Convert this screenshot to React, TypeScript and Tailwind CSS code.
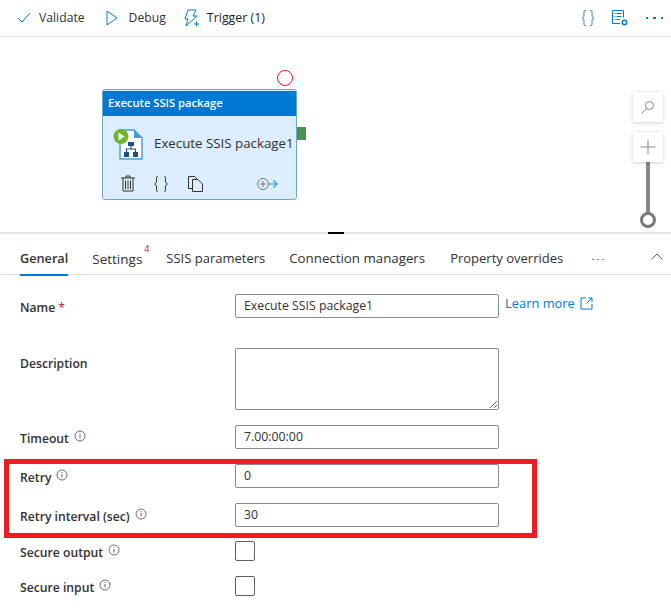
import React from "react";

const Info = () => (
  <svg width="12" height="12" viewBox="0 0 12 12" className="shrink-0 mb-[6px]" fill="none">
    <circle cx="6" cy="6" r="5" stroke="#605e5c" strokeWidth="0.9" />
    <rect x="5.5" y="5" width="1" height="3.6" fill="#7a5a70" />
    <rect x="5.5" y="3" width="1" height="1" fill="#7a5a70" />
  </svg>
);

const Label = ({ text, info, req, compact }: { text: string; info?: boolean; req?: boolean; compact?: boolean }) => (
  <div className={`w-[215px] shrink-0 flex items-center gap-[5px] ${compact ? "pt-[3px]" : "pt-[5px]"} text-[12.2px] font-semibold text-[#323130]`}>
    <span>{text}</span>
    {req && <span className="text-[#a4262c] font-normal -ml-[2px]">*</span>}
    {info && <Info />}
  </div>
);

const Field = ({ value }: { value: string }) => (
  <div className="w-[264px] h-6 border border-[#8a8886] rounded-[2px] px-2 flex items-center text-[12.3px] text-[#323130]">{value}</div>
);

const Row = ({ className, children }: { className: string; children: React.ReactNode }) => (
  <div className={`flex items-center ${className}`}>{children}</div>
);

const Box = () => <div className="w-5 h-5 border border-[#605e5c] rounded-[2px]" />;

export default function App() {
  return (
    <div className="w-[671px] h-[613px] overflow-hidden bg-white relative text-[12.5px] text-[#323130] font-['Open_Sans','Noto_Sans',sans-serif]">
      {/* toolbar */}
      <div className="h-[37px] border-b border-[#e1dfdd] flex items-center pl-[17px] pr-[8px]">
        <svg width="14" height="12" viewBox="0 0 14 12" fill="none" className="mr-[8px]">
          <path d="M1 6l4 4 8-9" stroke="#0078d4" strokeWidth="1" />
        </svg>
        <span className="text-[12.2px] pt-[1px] mr-[21px]">Validate</span>
        <svg width="12" height="16" viewBox="0 0 12 16" fill="none" className="mr-[11px]">
          <path d="M1 1l10 7-10 7z" stroke="#0078d4" strokeWidth="1" />
        </svg>
        <span className="text-[12.2px] pt-[1px] mr-[18px]">Debug</span>
        <svg width="15" height="18" viewBox="0 0 15 18" fill="none" className="mr-[8px]">
          <path d="M4 1h8L9 7h4L2 17l2-7H1z" stroke="#0078d4" strokeWidth="1" />
          <path d="M10 15h5M12.500 12.500v5" stroke="#0078d4" strokeWidth="1" />
        </svg>
        <span className="text-[12.4px] pt-[1px] text-[#201f1e]">Trigger (1)</span>
        <div className="ml-auto flex items-center">
          <svg width="14" height="16" viewBox="0 0 14 16" fill="none" className="mr-[17px]">
            <path d="M5 .5H4C2.500 .5 3 2.500 3 5c0 2-1 3-2 3 1 0 2 1 2 3 0 2.500-.5 4.500 1 4.500h1M9 .5h1c1.500 0 1 2 1 4.500 0 2 1 3 2 3-1 0-2 1-2 3 0 2.500.5 4.500-1 4.500H9" stroke="#3f78d8" strokeWidth="1" />
          </svg>
          <svg width="16" height="16" viewBox="0 0 16 16" fill="none" className="mr-[18px]">
            <path d="M8 13.500H.5V.5h11v7" stroke="#0078d4" strokeWidth="1" />
            <path d="M2.500 3.500h1M4.500 3.500h5M2.500 6.500h1M4.500 6.500h5M2.500 9.500h1M4.500 9.500h3" stroke="#0078d4" strokeWidth="1" />
            <circle cx="12.500" cy="12.500" r="2.200" stroke="#0078d4" strokeWidth="1.500" />
          </svg>
          <div className="flex gap-[5px]">
            <span className="w-[2.500px] h-[2.500px] bg-[#0078d4]" />
            <span className="w-[2.500px] h-[2.500px] bg-[#0078d4]" />
            <span className="w-[2.500px] h-[2.500px] bg-[#0078d4]" />
          </div>
        </div>
      </div>

      {/* canvas */}
      <div className="relative h-[197px] border-b-2 border-[#e6e6e6]">
        <div className="absolute left-[277px] top-[33px] w-[16px] h-[16px] rounded-full border border-[#f0141e]" />
        <div className="absolute left-[102px] top-[52px] w-[195px] h-[111px] rounded-[3px] border border-[#6fa8c4] bg-[#dcedfd] flex flex-col overflow-hidden">
          <div className="h-[25px] shrink-0 bg-[#0078d4] mt-[1px] text-white text-[11.2px] font-semibold flex items-center pl-[5px]">Execute SSIS package</div>
          <div className="flex items-center mt-[11px] pl-[10px]">
            <svg width="32" height="34" viewBox="0 0 32 34" fill="none" className="mr-[9px]">
              <path d="M7 3h14l8 8v21H7z" fill="#fff" stroke="#4a9ddc" strokeWidth="1.500" />
              <path d="M21 3v8h8z" fill="#3f9de0" />
              <rect x="15" y="15" width="6" height="4" fill="#1a4f8a" />
              <rect x="11" y="25" width="5" height="5" fill="#1a4f8a" />
              <rect x="20" y="25" width="5" height="5" fill="#1a4f8a" />
              <path d="M18 19v3M13.500 25v-3h9v3" stroke="#1a4f8a" strokeWidth="1.200" />
              <circle cx="8" cy="9.500" r="7.500" fill="#6fb52c" />
              <path d="M5.500 5.500l6 4-6 4z" fill="#fff" />
            </svg>
            <span className="text-[#323130] whitespace-nowrap text-[13.3px]">Execute SSIS package1</span>
          </div>
          <div className="flex items-center mt-[14px] pl-[18px]">
            <svg width="14" height="17" viewBox="0 0 14 17" fill="none" className="mr-[19px]">
              <path d="M0 3h14M5 3V1h4v2M2 3v13h10V3M4.500 5.500V14M7 5.500V14M9.500 5.500V14" stroke="#323130" strokeWidth="1" />
            </svg>
            <svg width="14" height="16" viewBox="0 0 14 16" fill="none" className="mr-[20px]">
              <path d="M4 .5H3.500C2 .5 2.500 2.500 2.500 5c0 2-1 3-2 3 1 0 2 1 2 3 0 2.500-.5 4.500 1 4.500H4M10 .5h.5C12 .5 11.500 2.500 11.500 5c0 2 1 3 2 3-1 0-2 1-2 3 0 2.500.5 4.500-1 4.500H10" stroke="#323130" strokeWidth="1" />
            </svg>
            <svg width="15" height="16" viewBox="0 0 15 16" fill="none" className="mr-[54px]">
              <path d="M4.500 12.500H.5V.5h6l3 3M4.500 3.500h5.500l4.500 4.500v7.500h-10z" stroke="#323130" strokeWidth="1" />
            </svg>
            <svg width="21" height="12" viewBox="0 0 21 12" fill="none">
              <circle cx="6" cy="6" r="5.500" stroke="#605e5c" strokeWidth="0.800" />
              <path d="M3 6h6M6 3v6" stroke="#605e5c" strokeWidth="0.800" />
              <path d="M11 6h9M16.500 2.500L20 6l-3.500 3.500" stroke="#1a9cc9" strokeWidth="1.200" />
            </svg>
          </div>
        </div>
        <div className="absolute left-[297px] top-[90px] w-[9px] h-[13px] bg-[#4a9150]" />
        {/* zoom controls */}
        <div className="absolute left-[633px] top-[55px] w-[30px] h-[30px] bg-white shadow-[0_1px_4px_rgba(0,0,0,0.2)] flex items-center justify-center">
          <svg width="14" height="14" viewBox="0 0 14 14" fill="none">
            <circle cx="8.500" cy="5.500" r="4" stroke="#8a8886" />
            <path d="M5.500 8.500L1 13" stroke="#8a8886" />
          </svg>
        </div>
        <div className="absolute left-[646px] top-[120px] w-[4px] h-[56px] bg-[#8a8886]" />
        <div className="absolute left-[633px] top-[95px] w-[30px] h-[30px] bg-white shadow-[0_1px_4px_rgba(0,0,0,0.2)] flex items-center justify-center">
          <svg width="16" height="16" viewBox="0 0 16 16" fill="none">
            <path d="M0.500 8h15M8 0.500v15" stroke="#8a8886" />
          </svg>
        </div>
        <div className="absolute left-[640px] top-[175px] w-[16px] h-[16px] rounded-full bg-white border-[3px] border-[#7a7a7a]" />
        <div className="absolute left-[328px] top-[195px] w-[16px] h-[2px] bg-black" />
      </div>

      {/* tabs */}
      <div className="h-[41px] border-b border-[#e1dfdd] flex items-stretch pl-[20px] text-[13.1px] relative">
        <div className="flex items-center border-b-2 border-[#0078d4] h-[42px] pt-[10px] text-[12.7px] font-semibold text-[#323130]">General</div>
        <div className="flex items-center ml-[24px] pt-[10px] text-[13.5px] relative">
          Settings
          <span className="absolute right-[-7px] top-[10px] text-[9px] text-[#c50f1f] leading-none">4</span>
        </div>
        <div className="flex items-center ml-[24px] pt-[10px] text-[13px]">SSIS parameters</div>
        <div className="flex items-center ml-[24px] pt-[10px] text-[13.3px]">Connection managers</div>
        <div className="flex items-center ml-[25px] pt-[10px] text-[13px]">Property overrides</div>
        <div className="flex items-center ml-[29px] pt-[10px] gap-[3px]">
          <span className="w-[2px] h-[1px] bg-[#8a8886]" />
          <span className="w-[2px] h-[1px] bg-[#8a8886]" />
          <span className="w-[2px] h-[1px] bg-[#8a8886]" />
        </div>
        <svg width="12" height="7" viewBox="0 0 12 7" fill="none" className="ml-auto mr-[8px] mt-[19px]">
          <path d="M0.500 6.500L6 1l5.500 5.500" stroke="#605e5c" />
        </svg>
      </div>

      {/* form */}
      <div className="pl-[20px]">
        <Row className="mt-[19px]">
          <Label text="Name" req />
          <Field value="Execute SSIS package1" />
          <a className="ml-[6px] mb-[6px] leading-[18px] text-[#0078d4] text-[12.9px] flex items-center gap-[5px]">
            Learn more
            <svg width="13" height="13" viewBox="0 0 13 13" fill="none">
              <path d="M6 1H1v11h11V7M8 1h4v4M12 1L6.500 6.500" stroke="#0078d4" />
            </svg>
          </a>
        </Row>
        <div className="flex mt-[30px]">
          <div className="w-[215px] shrink-0 text-[12.2px] font-semibold mt-[7px]">Description</div>
          <textarea readOnly className="w-[264px] h-[62px] border border-[#8a8886] rounded-[2px] resize-y block" />
        </div>
        <Row className="mt-[15px]">
          <Label text="Timeout" info />
          <Field value="7.00:00:00" />
        </Row>
        <Row className="mt-[15px]">
          <Label text="Retry" info />
          <Field value="0" />
        </Row>
        <Row className="mt-[15px]">
          <Label text="Retry interval (sec)" info />
          <Field value="30" />
        </Row>
        <Row className="mt-[13.5px]">
          <Label text="Secure output" info compact />
          <Box />
        </Row>
        <Row className="mt-[12.5px]">
          <Label text="Secure input" info />
          <Box />
        </Row>
      </div>

      {/* annotation */}
      <div className="absolute left-[4px] top-[459px] w-[533px] h-[79px] border-[5px] border-[#ed1c24] pointer-events-none" />
    </div>
  );
}
